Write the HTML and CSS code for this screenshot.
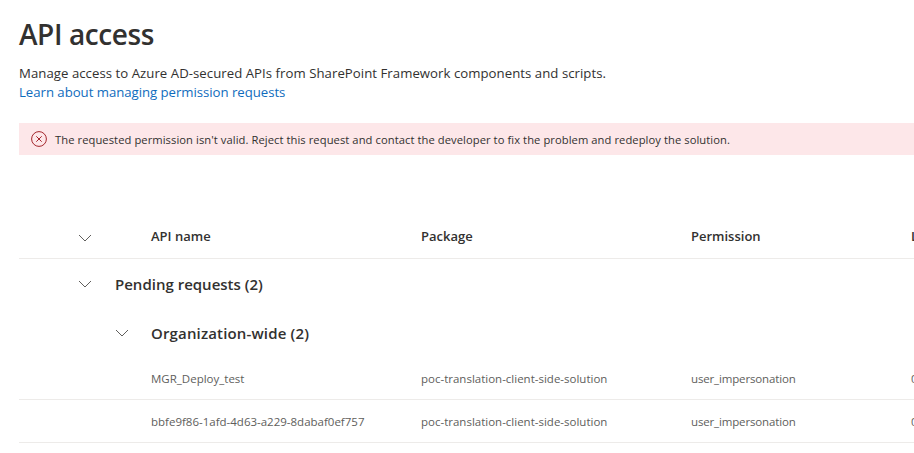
FILE: index.html
```html
<!DOCTYPE html>
<html lang="en">
<head>
    <meta charset="UTF-8">
    <title>API access</title>
    <meta name="viewport" content="width=device-width, initial-scale=1.0">
    <link rel="stylesheet" href="styles.css">
</head>
<body>
    <div class="page">
        <h1>API access</h1>
        <p class="intro">Manage access to Azure AD-secured APIs from SharePoint Framework components and scripts.</p>
        <a class="learn-link" href="#">Learn about managing permission requests</a>

        <div class="error-bar">
            <svg class="error-icon" viewBox="0 0 16 16" width="16" height="16">
                <circle cx="8" cy="8" r="7.4" fill="none" stroke="#a4262c" stroke-width="1"/>
                <path d="M5.3 5.3l5.4 5.4M10.7 5.3l-5.4 5.4" fill="none" stroke="#a4262c" stroke-width="1"/>
            </svg>
            <span>The requested permission isn't valid. Reject this request and contact the developer to fix the problem and redeploy the solution.</span>
        </div>

        <div class="table">
            <div class="row header-row">
                <svg class="chevron chevron-outer" viewBox="0 0 14 8" width="14" height="8"><path d="M1 1l6 6 6-6" fill="none" stroke="#605e5c" stroke-width="1"/></svg>
                <div class="cell">API name</div>
                <div class="cell">Package</div>
                <div class="cell">Permission</div>
                <div class="cell">Last requested</div>
            </div>
            <div class="group group-pending">
                <svg class="chevron chevron-outer" viewBox="0 0 14 8" width="14" height="8"><path d="M1 1l6 6 6-6" fill="none" stroke="#605e5c" stroke-width="1"/></svg>
                <span>Pending requests (2)</span>
            </div>
            <div class="group group-org">
                <svg class="chevron chevron-inner" viewBox="0 0 14 8" width="14" height="8"><path d="M1 1l6 6 6-6" fill="none" stroke="#605e5c" stroke-width="1"/></svg>
                <span>Organization-wide (2)</span>
            </div>
            <div class="row data-row first-row">
                <div class="cell">MGR_Deploy_test</div>
                <div class="cell">poc-translation-client-side-solution</div>
                <div class="cell perm-cell">user_impersonation</div>
                <div class="cell">01/12/2021</div>
            </div>
            <div class="row data-row">
                <div class="cell">bbfe9f86-1afd-4d63-a229-8dabaf0ef757</div>
                <div class="cell">poc-translation-client-side-solution</div>
                <div class="cell perm-cell">user_impersonation</div>
                <div class="cell">01/12/2021</div>
            </div>
        </div>
    </div>
</body>
</html>
```
FILE: styles.css
```css
html, body {
    margin: 0;
    height: 100%;
    overflow: hidden;
    background-color: #fff;
}
body {
    font-family: "Open Sans", "Noto Sans", "Liberation Sans", sans-serif;
    color: #323130;
}
.page {
    width: 1200px;
    padding: 16px 0 0 19px;
    box-sizing: border-box;
}
h1 {
    margin: 0;
    font-size: 28px;
    line-height: 36px;
    font-weight: 600;
    letter-spacing: -0.4px;
}
.intro {
    margin: 12px 0 0 0;
    font-size: 13.2px;
    line-height: 19px;
    letter-spacing: 0.04px;
}
.learn-link {
    display: block;
    font-size: 13.2px;
    line-height: 19px;
    letter-spacing: -0.03px;
    color: #0f6cbd;
    text-decoration: none;
}
.error-bar {
    display: flex;
    align-items: center;
    height: 32px;
    margin-top: 21px;
    padding-left: 12px;
    background-color: #fde7e9;
    font-size: 11.2px;
    letter-spacing: 0.07px;
}
.error-icon {
    margin-right: 8px;
    flex-shrink: 0;
}
.table {
    margin-top: 60px;
}
.row {
    display: grid;
    grid-template-columns: 270px 270px 220px 1fr;
    padding-left: 132px;
    align-items: center;
    border-bottom: 1px solid #edebe9;
    position: relative;
}
.header-row {
    height: 42px;
    padding-bottom: 1px;
    font-size: 13px;
    font-weight: 600;
}
.data-row {
    height: 42px;
    font-size: 11.5px;
    color: #605e5c;
}
.first-row {
    height: 41px;
    padding-top: 2px;
}
.perm-cell {
    letter-spacing: -0.15px;
}
.cell {
    white-space: nowrap;
}
.group {
    display: flex;
    align-items: center;
    font-size: 15px;
    font-weight: 600;
}
.group-pending {
    height: 50px;
    padding-left: 96px;
    position: relative;
}
.group-org {
    height: 47px;
    padding-left: 132px;
    position: relative;
    letter-spacing: 0.15px;
}
.chevron {
    position: absolute;
    top: 50%;
    margin-top: -4px;
}
.header-row .chevron {
    margin-top: -3px;
}
.chevron-outer {
    left: 59px;
}
.chevron-inner {
    left: 96px;
}
```
